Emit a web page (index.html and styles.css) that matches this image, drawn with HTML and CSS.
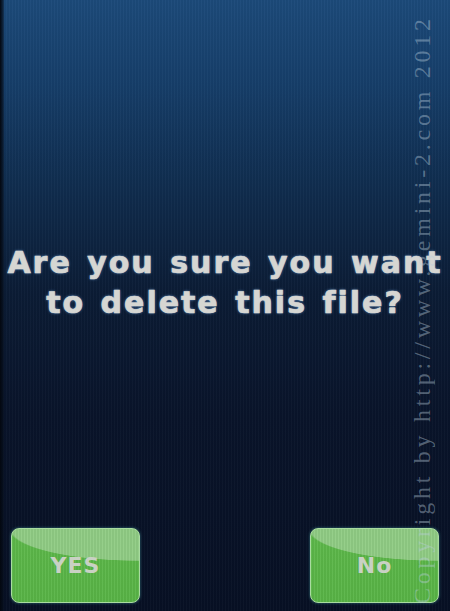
FILE: index.html
```html
<!DOCTYPE html>
<html>
<head>
<meta charset="utf-8">
<link rel="stylesheet" href="styles.css">
</head>
<body>
<div class="screen">
  <div class="message">
    <p class="question">Are you sure you want<br>to delete this file?</p>
  </div>
  <div class="buttons">
    <div class="btn">YES</div>
    <div class="btn">No</div>
  </div>
  <div class="watermark">Copyright by http://www.gemini-2.com 2012</div>
</div>
</body>
</html>
```

FILE: styles.css
```css
html, body {
  margin: 0;
  padding: 0;
  background: #060c18;
}

.screen {
  position: relative;
  width: 450px;
  height: 611px;
  overflow: hidden;
  display: flex;
  flex-direction: column;
  background:
    repeating-linear-gradient(90deg, rgba(255,255,255,0.025) 0 1px, rgba(0,0,0,0.03) 1px 3px),
    linear-gradient(180deg, #1c4a7a 0%, #163e69 14%, #0f2b4c 32%, #0b1c35 48%, #09142a 68%, #071024 100%);
  font-family: "DejaVu Sans", Verdana, sans-serif;
}

.screen::before {
  content: "";
  position: absolute;
  left: 0;
  top: 0;
  width: 4px;
  height: 100%;
  background: linear-gradient(90deg, #03070f, rgba(6,16,30,0.4));
}

.message {
  flex: 1;
  display: flex;
  align-items: center;
  justify-content: center;
  padding-top: 38px;
}

.question {
  margin: 0;
  text-align: center;
  color: #d6d6d2;
  font-weight: bold;
  font-size: 30px;
  line-height: 40px;
  letter-spacing: 2px;
  word-spacing: 3px;
  white-space: nowrap;
  -webkit-text-stroke: 0.6px #d6d6d2;
  text-shadow: 0 0 3px rgba(120, 175, 235, 0.75), 0 0 1px rgba(200, 230, 255, 0.6);
}

.buttons {
  display: flex;
  justify-content: space-between;
  padding: 0 11px 8px 11px;
}

.btn {
  position: relative;
  width: 129px;
  height: 75px;
  box-sizing: border-box;
  border-radius: 8px;
  border: 1px solid #a9dba0;
  box-shadow: 0 0 3px rgba(90, 200, 200, 0.5);
  background:
    repeating-linear-gradient(90deg, rgba(255,255,255,0.05) 0 1px, rgba(0,0,0,0.04) 1px 3px),
    radial-gradient(ellipse 130px 32px at 100% 0%, #90cc84 0 98%, rgba(143,203,130,0) 100%),
    linear-gradient(180deg, #80c670 0px, #5db84a 6px, #58b446 100%);
  display: flex;
  align-items: center;
  justify-content: center;
  color: #c9d1c4;
  font-weight: bold;
  font-size: 22px;
  letter-spacing: 1px;
  overflow: hidden;
}

.watermark {
  position: absolute;
  left: 409px;
  top: 12px;
  height: 592px;
  width: 26px;
  writing-mode: vertical-rl;
  transform: rotate(180deg);
  font-family: "Liberation Serif", "Times New Roman", serif;
  font-size: 24px;
  line-height: 26px;
  letter-spacing: 3.75px;
  color: rgba(185, 205, 220, 0.42);
  white-space: nowrap;
}
```
